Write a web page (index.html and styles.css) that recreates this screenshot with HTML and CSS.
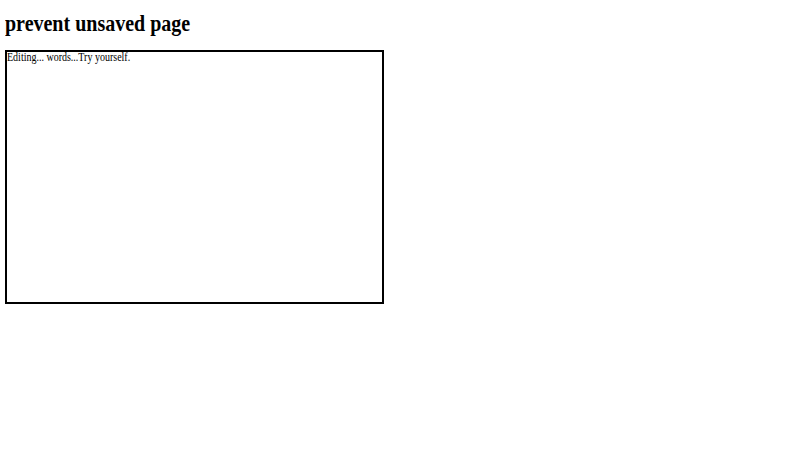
FILE: index.html
```html
<!DOCTYPE html>
<html>
<head>
<meta charset="utf-8">
<link rel="stylesheet" href="styles.css">
</head>
<body>
<h1 class="title">prevent unsaved page</h1>
<div class="editor" contenteditable="true"><span class="editor-text">Editing... words...Try yourself.</span></div>
</body>
</html>
```
FILE: styles.css
```css
body {
  margin: 5px;
  font-family: "Liberation Serif", "Times New Roman", serif;
  color: #000;
  background: #fff;
}
.title {
  font-size: 24px;
  font-weight: bold;
  margin: 4px 0 13px;
  line-height: 28px;
  transform: scaleX(0.833);
  transform-origin: left top;
}
.editor {
  box-sizing: border-box;
  width: 379px;
  height: 254px;
  border: 2px solid #000;
  font-size: 12px;
  line-height: 10px;
  outline: none;
}
.editor-text {
  display: inline-block;
  transform: scaleX(0.833);
  transform-origin: left top;
  white-space: nowrap;
}
```
